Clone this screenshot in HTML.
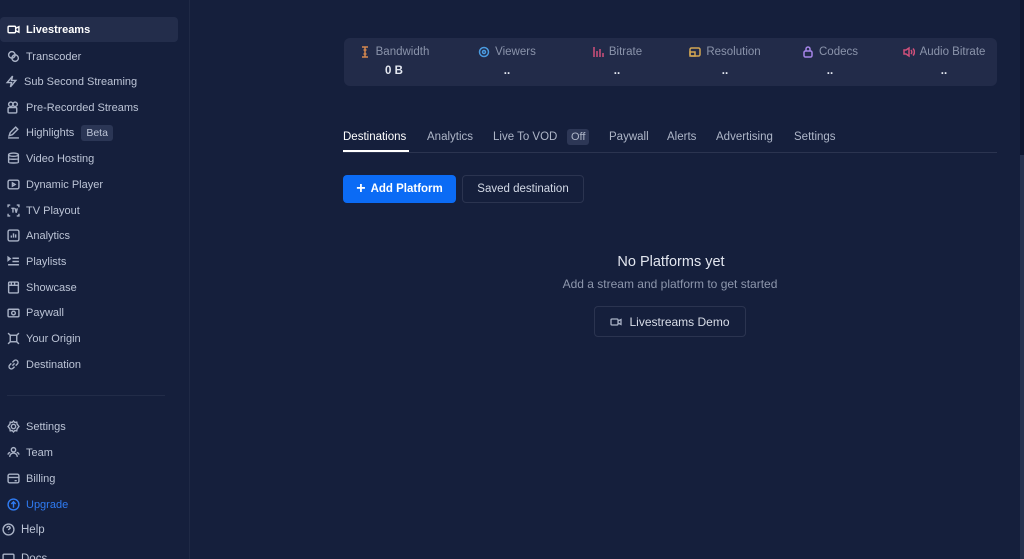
<!DOCTYPE html>
<html><head><meta charset="utf-8"><style>
*{box-sizing:border-box;margin:0;padding:0}
html,body{width:1024px;height:559px;overflow:hidden}
body{background:#151f3c;font-family:"Liberation Sans",sans-serif;color:#c9d0e0;position:relative}
.side{position:absolute;left:0;top:0;width:190px;height:559px;border-right:1px solid #1f2945;overflow:hidden}
.it{position:absolute;left:0;height:25px;width:178px;display:flex;align-items:center;font-size:11px;color:#bcc4d6;padding-left:7px}
.it svg{width:13px;height:13px;margin-right:6px;stroke:#a9b2c6;fill:none;stroke-width:1.3}
.it.act{background:#232d4b;border-radius:4px;color:#fff;font-weight:bold}
.it.act svg{stroke:#fff}
.badge{background:#2b3655;border-radius:3px;padding:2px 5px;margin-left:7px;font-size:10.5px}
.sep{position:absolute;left:7px;top:395px;width:158px;height:1px;background:#222c48}
.stats{position:absolute;left:344px;top:38px;width:653px;height:48px;background:#222b49;border-radius:6px}
.st{position:absolute;top:0;text-align:center;width:100px}
.st .l{font-size:11.5px;color:#8b94ab;margin-top:8px;display:flex;align-items:center;justify-content:center}
.st .l svg{width:12px;height:12px;margin-right:5px;fill:none;stroke-width:1.5}
.st .v{font-size:11.5px;color:#e4e8f1;margin-top:7px;font-weight:bold}
.tabs{position:absolute;left:343px;top:128px;width:654px;height:25px;border-bottom:1px solid #2b3450;font-size:11.5px;color:#aeb6c8}
.tabs span{position:absolute;top:3px}
.btn{position:absolute;height:28px;border-radius:4px;font-size:11.5px;display:flex;align-items:center;justify-content:center}
.sb{position:absolute;right:0;top:0;width:4px;height:559px;background:#0f1630}
.sb div{position:absolute;top:155px;width:4px;height:404px;background:#26304d}
</style></head><body>
<div class="side">
<div class="it act" style="top:17px"><svg viewBox="0 0 12 12"><rect x="1" y="3" width="7" height="6" rx="1"/><path d="M8 5l3-1.5v5L8 7"/></svg>Livestreams</div>
<div class="it" style="top:44px"><svg viewBox="0 0 12 12"><circle cx="4.5" cy="4.5" r="3"/><circle cx="7.5" cy="7.5" r="3"/></svg>Transcoder</div>
<div class="it" style="top:69px;padding-left:5px"><svg viewBox="0 0 12 12"><path d="M7 1L2 7h4l-1 4 5-6H6z"/></svg>Sub Second Streaming</div>
<div class="it" style="top:95px"><svg viewBox="0 0 12 12"><circle cx="3.5" cy="3" r="2"/><circle cx="7.5" cy="3" r="2"/><rect x="1" y="6" width="8" height="5" rx="1"/></svg>Pre-Recorded Streams</div>
<div class="it" style="top:120px"><svg viewBox="0 0 12 12"><path d="M2 9l1-3 5-5 2 2-5 5zM1 11h10"/></svg>Highlights<span class="badge">Beta</span></div>
<div class="it" style="top:146px"><svg viewBox="0 0 12 12"><ellipse cx="6" cy="2.5" rx="4.5" ry="1.5"/><path d="M1.5 2.5v7c0 1 9 1 9 0v-7M1.5 6c0 1 9 1 9 0"/></svg>Video Hosting</div>
<div class="it" style="top:172px"><svg viewBox="0 0 12 12"><rect x="1" y="2" width="10" height="8" rx="1.5"/><path d="M5 4.5v3l2.5-1.5z"/></svg>Dynamic Player</div>
<div class="it" style="top:198px"><svg viewBox="0 0 12 12"><path d="M1 3V1h2M9 1h2v2M11 9v2H9M3 11H1V9M4 4h3M5.5 4v4M7.5 4l1 4 1-4"/></svg>TV Playout</div>
<div class="it" style="top:223px"><svg viewBox="0 0 12 12"><rect x="1" y="1" width="10" height="10" rx="1.5"/><path d="M4 8V6M6 8V4M8 8V5"/></svg>Analytics</div>
<div class="it" style="top:249px"><svg viewBox="0 0 12 12"><path d="M1 2l2 1.5L1 5zM5 3h6M5 6h6M1 9h10"/></svg>Playlists</div>
<div class="it" style="top:275px"><svg viewBox="0 0 12 12"><rect x="1.5" y="1" width="9" height="10" rx="1"/><path d="M1.5 4h9M4 1v3M7 1v3"/></svg>Showcase</div>
<div class="it" style="top:300px"><svg viewBox="0 0 12 12"><rect x="1" y="3" width="10" height="7" rx="1"/><circle cx="6" cy="6.5" r="1.7"/></svg>Paywall</div>
<div class="it" style="top:326px"><svg viewBox="0 0 12 12"><rect x="3" y="3" width="6" height="6"/><path d="M1 1l2 2M11 1L9 3M1 11l2-2M11 11L9 9"/></svg>Your Origin</div>
<div class="it" style="top:352px"><svg viewBox="0 0 12 12"><path d="M5 7l2-2M4 5L2.5 6.5a2 2 0 003 3L7 8M8 7l1.5-1.5a2 2 0 00-3-3L5 4"/></svg>Destination</div>
<div class="sep"></div>
<div class="it" style="top:414px"><svg viewBox="0 0 12 12"><circle cx="6" cy="6" r="2"/><path d="M6 1l1.2 1.3 1.8-.3.3 1.8L11 6l-1.7 2.2-.3 1.8-1.8-.3L6 11l-1.2-1.3-1.8.3-.3-1.8L1 6l1.7-2.2.3-1.8 1.8.3z"/></svg>Settings</div>
<div class="it" style="top:440px"><svg viewBox="0 0 12 12"><circle cx="6" cy="3.5" r="2"/><path d="M2.5 10a3.5 3.5 0 017 0M1 8a2 2 0 012-2M11 8a2 2 0 00-2-2"/></svg>Team</div>
<div class="it" style="top:466px"><svg viewBox="0 0 12 12"><rect x="1" y="2" width="10" height="8" rx="1.5"/><path d="M1 5h10M7 8h2"/></svg>Billing</div>
<div class="it" style="top:492px;color:#2f7bf2"><svg viewBox="0 0 12 12" style="stroke:#2f7bf2"><circle cx="6" cy="6" r="5"/><path d="M6 9V3.5M4 5.5l2-2 2 2"/></svg>Upgrade</div>
<div class="it" style="top:517px;padding-left:2px;font-size:11.5px"><svg viewBox="0 0 12 12" style="width:13px;height:13px"><circle cx="6" cy="6" r="5"/><path d="M4.5 4.5a1.5 1.5 0 113 .3c-.4.6-1.5.9-1.5 1.8M6 8.5v.3"/></svg>Help</div>
<div class="it" style="top:546px;padding-left:2px;font-size:11.5px"><svg viewBox="0 0 12 12"><rect x="1" y="2" width="10" height="9" rx="1"/></svg>Docs</div>
</div>

<div class="stats">
<div class="st" style="left:0"><div class="l"><svg viewBox="0 0 12 12" style="stroke:#d3874f"><path d="M3 1h6M3 11h6M6 1v10M4.5 4h3M4.5 8h3"/></svg>Bandwidth</div><div class="v">0 B</div></div>
<div class="st" style="left:113px"><div class="l"><svg viewBox="0 0 12 12" style="stroke:#4a9be0"><circle cx="6" cy="6" r="4.5"/><circle cx="6" cy="6" r="1.5"/></svg>Viewers</div><div class="v">..</div></div>
<div class="st" style="left:223px"><div class="l"><svg viewBox="0 0 12 12" style="stroke:#d0507a"><path d="M2 1v10M5 5v6M8 3v8M11 7v4"/></svg>Bitrate</div><div class="v">..</div></div>
<div class="st" style="left:331px"><div class="l"><svg viewBox="0 0 12 12" style="stroke:#d2a653"><rect x="1" y="2" width="10" height="8" rx="1.5"/><rect x="1" y="6" width="5" height="4"/></svg>Resolution</div><div class="v">..</div></div>
<div class="st" style="left:436px"><div class="l"><svg viewBox="0 0 12 12" style="stroke:#a585e8"><rect x="2" y="5" width="8" height="6" rx="1.5"/><path d="M4 5V3a2 2 0 014 0v2"/></svg>Codecs</div><div class="v">..</div></div>
<div class="st" style="left:550px;width:100px"><div class="l"><svg viewBox="0 0 12 12" style="stroke:#d0507a"><path d="M1 4h2l3-2v8L3 8H1zM8 4a3 3 0 010 4M10 2.5a5 5 0 010 7"/></svg>Audio Bitrate</div><div class="v">..</div></div>
</div>

<div class="tabs">
<span style="left:0;color:#fff">Destinations</span>
<div style="position:absolute;left:0;top:22px;width:66px;height:2px;background:#fff"></div>
<span style="left:84px">Analytics</span>
<span style="left:150px">Live To VOD</span>
<span style="left:224px;top:1px;background:#2d3756;border-radius:3px;padding:2px 4px;font-size:11px">Off</span>
<span style="left:266px">Paywall</span>
<span style="left:324px">Alerts</span>
<span style="left:373px">Advertising</span>
<span style="left:451px">Settings</span>
</div>

<div class="btn" style="left:343px;top:175px;width:113px;background:#0b6bf5;color:#fff;font-weight:bold"><span style="font-size:16px;margin-right:5px;font-weight:bold">+</span>Add Platform</div>
<div class="btn" style="left:462px;top:175px;width:122px;border:1px solid #2b3450;color:#d3d9e6">Saved destination</div>

<div style="position:absolute;left:543px;top:254px;width:256px;text-align:center;font-size:14.5px;color:#e2e6ef">No Platforms yet</div>
<div style="position:absolute;left:520px;top:277px;width:300px;text-align:center;font-size:12px;color:#8e97ad">Add a stream and platform to get started</div>
<div class="btn" style="left:594px;top:306px;width:152px;height:31px;border:1px solid #2b3450;color:#d8dde8;font-size:12px"><svg viewBox="0 0 12 12" style="width:12px;height:12px;margin-right:7px;fill:none;stroke:#aab3c6;stroke-width:1.3"><rect x="1" y="3" width="7" height="6" rx="1"/><path d="M8 5l3-1.5v5L8 7"/></svg>Livestreams Demo</div>

<div class="sb"><div></div></div>
</body></html>
